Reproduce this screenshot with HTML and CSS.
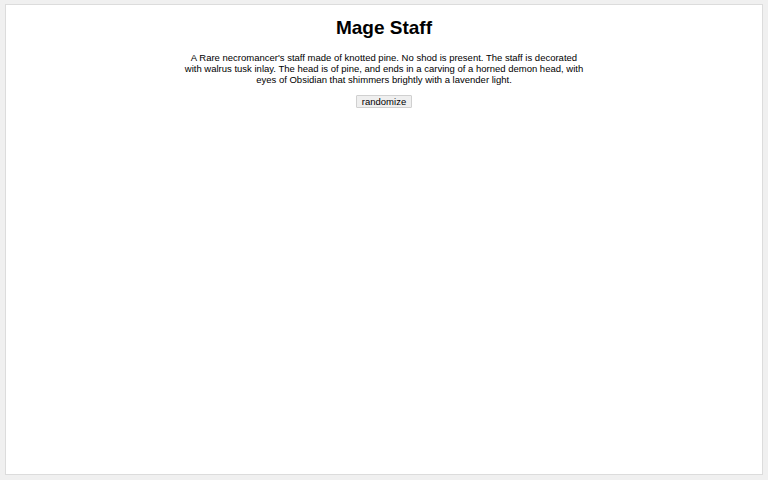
FILE: index.html
```html
<!DOCTYPE html>
<html lang="en">
<head>
    <meta charset="UTF-8">
    <meta name="viewport" content="width=device-width, initial-scale=1.0">
    <title>Mage Staff</title>
    <link rel="stylesheet" href="styles.css">
</head>
<body>
    <div class="card">
        <h1 id="itemName">Mage Staff</h1>
        <p id="itemText">A Rare necromancer's staff made of knotted pine. No shod is present. The staff is decorated with walrus tusk inlay. The head is of pine, and ends in a carving of a horned demon head, with eyes of Obsidian that shimmers brightly with a lavender light.</p>
        <button id="randomize">randomize</button>
    </div>
</body>
</html>
```

FILE: styles.css
```css
*{
    margin: 0;
    box-sizing: border-box;
}
body {
    font-family: "Liberation Sans", Arial, sans-serif;
    background: #f0f0f0;
    padding: 4px 5px 5px 5px;
    height: 100vh;
}
.card {
    background: #fff;
    border: 1px solid #dcdcdc;
    height: 100%;
    text-align: center;
    padding-top: 12px;
}
.card h1 {
    font-size: 19px;
    line-height: 22px;
    margin-bottom: 13px;
}
.card p {
    width: 402px;
    margin: 0 auto 6px auto;
    font-size: 9.5px;
    line-height: 11px;
}
.card button {
    font-family: "Liberation Sans", Arial, sans-serif;
    font-size: 9.5px;
    line-height: 11px;
    padding: 0 5px;
    background: #efefef;
    border: 1px solid #d0d0d0;
    border-radius: 1px;
}
```
